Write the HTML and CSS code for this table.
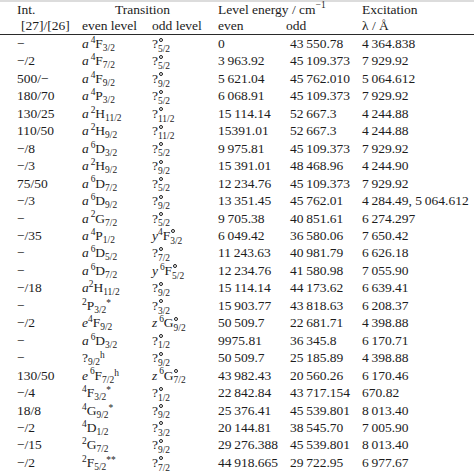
FILE: index.html
```html
<!DOCTYPE html>
<html>
<head>
<meta charset="utf-8">
<link rel="stylesheet" href="styles.css">
</head>
<body>
<div class="stripe"></div>
<table class="data">
<colgroup><col class="c1"><col class="c2"><col class="c3"><col class="c4"><col class="c5"><col class="c6"></colgroup>
<thead>
<tr class="h1"><th>Int.</th><th colspan="2" class="trans">Transition</th><th colspan="2">Level energy / cm<sup class="ex">−1</sup></th><th>Excitation</th></tr>
<tr class="h2"><th class="ref">[27]/[26]</th><th>even level</th><th>odd level</th><th>even</th><th class="oddh">odd</th><th>λ / Å</th></tr>
</thead>
<tbody>
<tr><td>−</td><td><i>a</i><sup class="pre g">4</sup>F<sub>3/2</sub></td><td>?<span class="ring"></span><sub class="st">5/2</sub></td><td>0</td><td>43&thinsp;550.78</td><td>4&thinsp;364.838</td></tr>
<tr><td>−/2</td><td><i>a</i><sup class="pre g">4</sup>F<sub>7/2</sub></td><td>?<span class="ring"></span><sub class="st">5/2</sub></td><td>3&thinsp;963.92</td><td>45&thinsp;109.373</td><td>7&thinsp;929.92</td></tr>
<tr><td>500/−</td><td><i>a</i><sup class="pre g">4</sup>F<sub>9/2</sub></td><td>?<span class="ring"></span><sub class="st">9/2</sub></td><td>5&thinsp;621.04</td><td>45&thinsp;762.010</td><td>5&thinsp;064.612</td></tr>
<tr><td>180/70</td><td><i>a</i><sup class="pre g">4</sup>P<sub>3/2</sub></td><td>?<span class="ring"></span><sub class="st">5/2</sub></td><td>6&thinsp;068.91</td><td>45&thinsp;109.373</td><td>7&thinsp;929.92</td></tr>
<tr><td>130/25</td><td><i>a</i><sup class="pre g">2</sup>H<sub>11/2</sub></td><td>?<span class="ring"></span><sub class="st">11/2</sub></td><td>15&thinsp;114.14</td><td>52&thinsp;667.3</td><td>4&thinsp;244.88</td></tr>
<tr><td>110/50</td><td><i>a</i><sup class="pre g">2</sup>H<sub>9/2</sub></td><td>?<span class="ring"></span><sub class="st">11/2</sub></td><td>15391.01</td><td>52&thinsp;667.3</td><td>4&thinsp;244.88</td></tr>
<tr><td>−/8</td><td><i>a</i><sup class="pre g">6</sup>D<sub>3/2</sub></td><td>?<span class="ring"></span><sub class="st">5/2</sub></td><td>9&thinsp;975.81</td><td>45&thinsp;109.373</td><td>7&thinsp;929.92</td></tr>
<tr><td>−/3</td><td><i>a</i><sup class="pre g">2</sup>H<sub>9/2</sub></td><td>?<span class="ring"></span><sub class="st">9/2</sub></td><td>15&thinsp;391.01</td><td>48&thinsp;468.96</td><td>4&thinsp;244.90</td></tr>
<tr><td>75/50</td><td><i>a</i><sup class="pre g">6</sup>D<sub>7/2</sub></td><td>?<span class="ring"></span><sub class="st">5/2</sub></td><td>12&thinsp;234.76</td><td>45&thinsp;109.373</td><td>7&thinsp;929.92</td></tr>
<tr><td>−/3</td><td><i>a</i><sup class="pre g">6</sup>D<sub>9/2</sub></td><td>?<span class="ring"></span><sub class="st">9/2</sub></td><td>13&thinsp;351.45</td><td>45&thinsp;762.01</td><td>4&thinsp;284.49, 5&thinsp;064.612</td></tr>
<tr><td>−</td><td><i>a</i><sup class="pre g">2</sup>G<sub>7/2</sub></td><td>?<span class="ring"></span><sub class="st">5/2</sub></td><td>9&thinsp;705.38</td><td>40&thinsp;851.61</td><td>6&thinsp;274.297</td></tr>
<tr><td>−/35</td><td><i>a</i><sup class="pre g">4</sup>P<sub>1/2</sub></td><td><i>y</i><sup class="pre">4</sup>F<span class="ring"></span><sub class="st">3/2</sub></td><td>6&thinsp;049.42</td><td>36&thinsp;580.06</td><td>7&thinsp;650.42</td></tr>
<tr><td>−</td><td><i>a</i><sup class="pre g">6</sup>D<sub>5/2</sub></td><td>?<span class="ring"></span><sub class="st">7/2</sub></td><td>11&thinsp;243.63</td><td>40&thinsp;981.79</td><td>6&thinsp;626.18</td></tr>
<tr><td>−</td><td><i>a</i><sup class="pre g">6</sup>D<sub>7/2</sub></td><td><i>y</i><sup class="pre g">6</sup>F<span class="ring"></span><sub class="st">5/2</sub></td><td>12&thinsp;234.76</td><td>41&thinsp;580.98</td><td>7&thinsp;055.90</td></tr>
<tr><td>−/18</td><td><i>a</i><sup class="pre">2</sup>H<sub>11/2</sub></td><td>?<span class="ring"></span><sub class="st">9/2</sub></td><td>15&thinsp;114.14</td><td>44&thinsp;173.62</td><td>6&thinsp;639.41</td></tr>
<tr><td>−</td><td><sup class="pre">2</sup>P<sub>3/2</sub><sup class="ast">*</sup></td><td>?<span class="ring"></span><sub class="st">3/2</sub></td><td>15&thinsp;903.77</td><td>43&thinsp;818.63</td><td>6&thinsp;208.37</td></tr>
<tr><td>−/2</td><td><i>e</i><sup class="pre">4</sup>F<sub>9/2</sub></td><td><i>z</i><sup class="pre g">6</sup>G<span class="ring"></span><sub class="st">9/2</sub></td><td>50&thinsp;509.7</td><td>22&thinsp;681.71</td><td>4&thinsp;398.88</td></tr>
<tr><td>−</td><td><i>a</i><sup class="pre g">6</sup>D<sub>3/2</sub></td><td>?<span class="ring"></span><sub class="st">1/2</sub></td><td>9975.81</td><td>36&thinsp;345.8</td><td>6&thinsp;170.71</td></tr>
<tr><td>−</td><td>?<sub>9/2</sub><sup class="ast">h</sup></td><td>?<span class="ring"></span><sub class="st">9/2</sub></td><td>50&thinsp;509.7</td><td>25&thinsp;185.89</td><td>4&thinsp;398.88</td></tr>
<tr><td>130/50</td><td><i>e</i><sup class="pre g">6</sup>F<sub>7/2</sub><sup class="ast">h</sup></td><td><i>z</i><sup class="pre g">6</sup>G<span class="ring"></span><sub class="st">7/2</sub></td><td>43&thinsp;982.43</td><td>20&thinsp;560.26</td><td>6&thinsp;170.46</td></tr>
<tr><td>−/4</td><td><sup class="pre">4</sup>F<sub>3/2</sub><sup class="ast">*</sup></td><td>?<span class="ring"></span><sub class="st">1/2</sub></td><td>22&thinsp;842.84</td><td>43&thinsp;717.154</td><td>670.82</td></tr>
<tr><td>18/8</td><td><sup class="pre">4</sup>G<sub>9/2</sub><sup class="ast">*</sup></td><td>?<span class="ring"></span><sub class="st">9/2</sub></td><td>25&thinsp;376.41</td><td>45&thinsp;539.801</td><td>8&thinsp;013.40</td></tr>
<tr><td>−/2</td><td><sup class="pre">4</sup>D<sub>1/2</sub></td><td>?<span class="ring"></span><sub class="st">3/2</sub></td><td>20&thinsp;144.81</td><td>38&thinsp;545.70</td><td>7&thinsp;005.90</td></tr>
<tr><td>−/15</td><td><sup class="pre">2</sup>G<sub>7/2</sub></td><td>?<span class="ring"></span><sub class="st">9/2</sub></td><td>29&thinsp;276.388</td><td>45&thinsp;539.801</td><td>8&thinsp;013.40</td></tr>
<tr><td>−/2</td><td><sup class="pre">2</sup>F<sub>5/2</sub><sup class="ast">**</sup></td><td>?<span class="ring"></span><sub class="st">7/2</sub></td><td>44&thinsp;918.665</td><td>29&thinsp;722.95</td><td>6&thinsp;977.67</td></tr>
</tbody>
</table>
</body>
</html>
```
FILE: styles.css
```css
html, body {
  margin: 0;
  padding: 0;
  background: #ffffff;
}
body {
  font-family: "Liberation Serif", "DejaVu Serif", serif;
  font-size: 13.5px;
  color: #1c1c1c;
  overflow: hidden;
}
.stripe {
  height: 2px;
  background: #dcdcdc;
}
.data {
  border-collapse: collapse;
  table-layout: fixed;
  width: 474px;
}
.c1 { width: 82px; }
.c2 { width: 70px; }
.c3 { width: 66px; }
.c4 { width: 72px; }
.c5 { width: 72px; }
.c6 { width: 112px; }
.data th,
.data td {
  padding: 0;
  text-align: left;
  font-weight: normal;
  white-space: nowrap;
  vertical-align: middle;
}
.data th:first-child,
.data td:first-child {
  padding-left: 17px;
}
.data thead tr {
  height: 16px;
  line-height: 16px;
}
.data tbody tr {
  height: 17.46px;
  line-height: 17.46px;
}
.h2 th {
  border-bottom: 1.6px solid #2a2a2a;
}
.trans {
  padding-left: 33px !important;
}
.ref {
  text-indent: 4px;
}
.oddh {
  text-indent: -4px;
}
i {
  font-style: italic;
}
sup, sub {
  font-size: 0.7em;
  line-height: 0;
}
sub {
  vertical-align: -0.3em;
}
sup.pre {
  vertical-align: 0.55em;
}
sup.g {
  margin-left: 0.2em;
}
.ring {
  display: inline-block;
  box-sizing: border-box;
  width: 4px;
  height: 4px;
  border: 0.9px solid #1c1c1c;
  border-radius: 50%;
  margin-left: 0.5px;
  vertical-align: 6.5px;
}
sub.st {
  margin-left: -4.5px;
  vertical-align: -0.4em;
}
sup.ast {
  vertical-align: 0.45em;
}
sup.ex {
  vertical-align: 0.6em;
}
```
